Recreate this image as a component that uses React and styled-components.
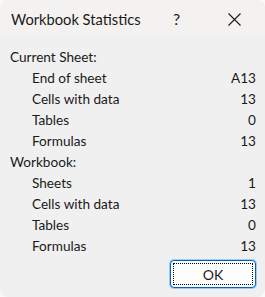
import React from "react";
import styled, { createGlobalStyle } from "styled-components";

const Global = createGlobalStyle`
  html, body { margin: 0; padding: 0; background: #fafafa; }
  body { font-family: "Lato", "Noto Sans", sans-serif; }
`;

const Dialog = styled.div`
  width: 265px;
  height: 297px;
  box-sizing: border-box;
  border-radius: 8px;
  overflow: hidden;
  background: #f0f0f0;
  display: flex;
  flex-direction: column;
`;

const TitleBar = styled.div`
  height: 38px;
  flex: none;
  background: #f4f2f0;
  display: flex;
  align-items: center;
  padding-left: 11px;
  color: #1a1a1a;
`;

const Title = styled.div`
  font-size: 14.7px;
  width: 162px;
  white-space: nowrap;
  padding-bottom: 1px;
`;

const Help = styled.div`
  font-size: 16px;
  width: 55px;
  padding-bottom: 1px;
`;

const Close = styled.div`
  width: 13px;
  height: 13px;
  display: flex;
`;

const Body = styled.div`
  padding: 9px 9px 0 10px;
  display: flex;
  flex-direction: column;
`;

const Section = styled.div`
  font-size: 13.6px;
  height: 21px;
  line-height: 21px;
  color: #1a1a1a;
`;

const Row = styled.div`
  display: flex;
  justify-content: space-between;
  font-size: 13.6px;
  height: 21px;
  line-height: 21px;
  padding-left: 22px;
  color: #1a1a1a;
`;

const Footer = styled.div`
  display: flex;
  justify-content: flex-end;
  padding: 3px 9px 0 0;
`;

const Button = styled.button`
  width: 86px;
  height: 28px;
  box-sizing: border-box;
  border: 1px solid #0067c0;
  border-radius: 4px;
  background: #fdfdfd;
  box-shadow: 0 0 0 1px #9ccbf0;
  padding: 2px;
  font-family: inherit;
  font-size: 14px;
  color: #1a1a1a;
`;

const Focus = styled.span`
  display: flex;
  align-items: center;
  justify-content: center;
  height: 100%;
  box-sizing: border-box;
  border: 1px dotted #000;
`;

const sheet = [
  ["End of sheet", "A13"],
  ["Cells with data", "13"],
  ["Tables", "0"],
  ["Formulas", "13"],
];
const book = [
  ["Sheets", "1"],
  ["Cells with data", "13"],
  ["Tables", "0"],
  ["Formulas", "13"],
];

export default function App() {
  return (
    <>
      <Global />
      <Dialog>
        <TitleBar>
          <Title>Workbook Statistics</Title>
          <Help>?</Help>
          <Close>
            <svg width="13" height="13" viewBox="0 0 13 13">
              <path d="M0.5 0.5 L12.5 12.5 M12.5 0.5 L0.5 12.5" stroke="#1a1a1a" strokeWidth="1.1" fill="none" />
            </svg>
          </Close>
        </TitleBar>
        <Body>
          <Section>Current Sheet:</Section>
          {sheet.map(([k, v]) => (
            <Row key={k}><span>{k}</span><span>{v}</span></Row>
          ))}
          <Section>Workbook:</Section>
          {book.map(([k, v]) => (
            <Row key={k}><span>{k}</span><span>{v}</span></Row>
          ))}
        </Body>
        <Footer>
          <Button><Focus>OK</Focus></Button>
        </Footer>
      </Dialog>
    </>
  );
}
